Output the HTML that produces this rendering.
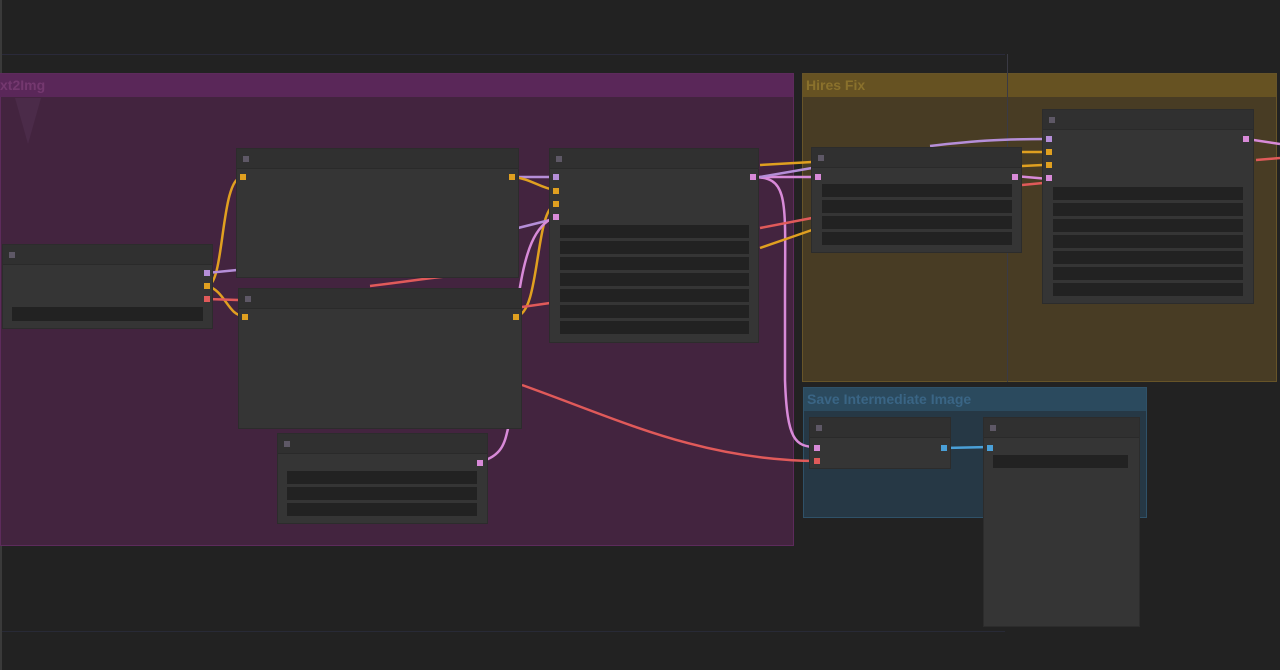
<!DOCTYPE html>
<html><head><meta charset="utf-8"><style>
*{margin:0;padding:0;box-sizing:border-box}
body{width:1280px;height:670px;background:#222;overflow:hidden;position:relative;font-family:"Liberation Sans",sans-serif}
.a{position:absolute}
.g{position:absolute}
.gh{position:absolute;left:0;right:0;top:0;height:23px;font-weight:bold;font-size:14px;padding:3px 0 0 3px}
.n{position:absolute;background:#353535;box-shadow:0 0 0 1px #2c2c2c}
.t{position:absolute;left:0;right:0;top:0;height:20px;background:#303030;border-bottom:1px solid #2a2a2a}
.t:before{content:"";position:absolute;left:6px;top:7px;width:6px;height:6px;background:#5e5866}
.w{position:absolute;background:#222;height:13px}
.p{position:absolute;width:6px;height:6px}
</style></head><body>
<div class="a" style="left:0;top:54px;width:1005px;height:1px;background:#2a2a3a"></div>
<div class="a" style="left:0;top:631px;width:1005px;height:1px;background:#282a36"></div>
<div class="a" style="left:0;top:0;width:2px;height:670px;background:#3a3a3a"></div>

<div class="g" style="left:0;top:73px;width:794px;height:473px;background:#43243f;border:1px solid #5d2b5c">
 <div class="gh" style="background:#5a2759;color:#74386f;left:-1px;padding-left:0">xt2Img</div>
 <div class="a" style="left:14px;top:24px;width:0;height:0;border-left:13px solid transparent;border-right:13px solid transparent;border-top:46px solid #4b2b49"></div>
</div>
<div class="g" style="left:802px;top:73px;width:475px;height:309px;background:#483c24;border:1px solid #675428">
 <div class="gh" style="background:#665222;color:#8a712c">Hires Fix</div>
</div>
<div class="g" style="left:803px;top:387px;width:344px;height:131px;background:#263845;border:1px solid #2f5168">
 <div class="gh" style="background:#2b4a5e;color:#3a6585">Save Intermediate Image</div>
</div>
<div class="a" style="left:1007px;top:54px;width:1px;height:328px;background:#3a3a44"></div>

<svg class="a" style="left:0;top:0" width="1280" height="670" fill="none" stroke-width="2.5">
 <path d="M207 286 C225 286 220 178 242 177" stroke="#e0a020"/>
 <path d="M207 286 C225 290 228 316 244 316" stroke="#e0a020"/>
 <path d="M207 273 L237 270" stroke="#b58ed8"/>
 <path d="M207 299 L238 300" stroke="#e05a5a"/>
 <path d="M370 286 C420 280 440 276 465 275" stroke="#e05a5a"/>
 <path d="M512 177 L550 177" stroke="#b58ed8"/>
 <path d="M512 177 C530 178 540 188 555 190" stroke="#e0a020"/>
 <path d="M516 316 C540 316 535 210 555 205" stroke="#e0a020"/>
 <path d="M518 228 L550 220" stroke="#b58ed8"/>
 <path d="M480 462 C505 455 505 440 510 420" stroke="#d88ad8"/>
 <path d="M522 307 L550 303" stroke="#e05a5a"/>
 <path d="M522 385 C620 420 700 460 817 461" stroke="#e05a5a"/>
 <path d="M518 300 C525 250 535 225 555 217" stroke="#d88ad8"/>
 <path d="M753 177 C790 177 785 200 785 300 L785 380 C787 440 795 447 817 447" stroke="#d88ad8"/>
 <path d="M753 177 L817 177" stroke="#d88ad8"/>
 <path d="M760 165 L812 162" stroke="#e0a020"/>
 <path d="M760 177 L812 168" stroke="#b58ed8"/>
 <path d="M760 228 L812 218" stroke="#e05a5a"/>
 <path d="M760 248 L812 230" stroke="#e0a020"/>
 <path d="M930 146 C980 140 1010 139 1049 139" stroke="#b58ed8"/>
 <path d="M1015 176 L1049 179" stroke="#d88ad8"/>
 <path d="M1022 152 L1043 152" stroke="#e0a020"/>
 <path d="M1022 166 L1043 165" stroke="#e0a020"/>
 <path d="M1022 185 L1043 183" stroke="#e05a5a"/>
 <path d="M1247 139 L1280 144" stroke="#d88ad8"/>
 <path d="M1256 160 L1280 158" stroke="#e05a5a"/>
 <path d="M944 448 L990 447" stroke="#4aa0d8"/>
</svg>

<div class="n" style="left:3px;top:245px;width:209px;height:83px"><div class="t"></div>
 <div class="w" style="left:9px;top:62px;width:191px;height:14px"></div></div>
<div class="n" style="left:237px;top:149px;width:281px;height:128px"><div class="t"></div></div>
<div class="n" style="left:239px;top:289px;width:282px;height:139px"><div class="t"></div></div>
<div class="n" style="left:278px;top:434px;width:209px;height:89px"><div class="t"></div>
 <div class="w" style="left:9px;top:37px;width:190px"></div><div class="w" style="left:9px;top:53px;width:190px"></div><div class="w" style="left:9px;top:69px;width:190px"></div></div>
<div class="n" style="left:550px;top:149px;width:208px;height:193px"><div class="t"></div>
 <div class="w" style="left:10px;top:76px;width:189px"></div><div class="w" style="left:10px;top:92px;width:189px"></div><div class="w" style="left:10px;top:108px;width:189px"></div><div class="w" style="left:10px;top:124px;width:189px"></div><div class="w" style="left:10px;top:140px;width:189px"></div><div class="w" style="left:10px;top:156px;width:189px"></div><div class="w" style="left:10px;top:172px;width:189px"></div></div>
<div class="n" style="left:812px;top:148px;width:209px;height:104px"><div class="t"></div>
 <div class="w" style="left:10px;top:36px;width:190px"></div><div class="w" style="left:10px;top:52px;width:190px"></div><div class="w" style="left:10px;top:68px;width:190px"></div><div class="w" style="left:10px;top:84px;width:190px"></div></div>
<div class="n" style="left:1043px;top:110px;width:210px;height:193px"><div class="t"></div>
 <div class="w" style="left:10px;top:77px;width:190px"></div><div class="w" style="left:10px;top:93px;width:190px"></div><div class="w" style="left:10px;top:109px;width:190px"></div><div class="w" style="left:10px;top:125px;width:190px"></div><div class="w" style="left:10px;top:141px;width:190px"></div><div class="w" style="left:10px;top:157px;width:190px"></div><div class="w" style="left:10px;top:173px;width:190px"></div></div>
<div class="n" style="left:810px;top:418px;width:140px;height:50px"><div class="t"></div></div>
<div class="n" style="left:984px;top:418px;width:155px;height:208px"><div class="t"></div>
 <div class="w" style="left:9px;top:37px;width:135px"></div></div>

<div class="p" style="left:204px;top:270px;background:#b58ed8"></div>
<div class="p" style="left:204px;top:283px;background:#e0a020"></div>
<div class="p" style="left:204px;top:296px;background:#e05a5a"></div>
<div class="p" style="left:240px;top:174px;background:#e0a020"></div>
<div class="p" style="left:509px;top:174px;background:#e0a020"></div>
<div class="p" style="left:242px;top:314px;background:#e0a020"></div>
<div class="p" style="left:513px;top:314px;background:#e0a020"></div>
<div class="p" style="left:477px;top:460px;background:#d88ad8"></div>
<div class="p" style="left:553px;top:174px;background:#b58ed8"></div>
<div class="p" style="left:553px;top:188px;background:#e0a020"></div>
<div class="p" style="left:553px;top:201px;background:#e0a020"></div>
<div class="p" style="left:553px;top:214px;background:#d88ad8"></div>
<div class="p" style="left:750px;top:174px;background:#d88ad8"></div>
<div class="p" style="left:815px;top:174px;background:#d88ad8"></div>
<div class="p" style="left:1012px;top:174px;background:#d88ad8"></div>
<div class="p" style="left:1046px;top:136px;background:#b58ed8"></div>
<div class="p" style="left:1046px;top:149px;background:#e0a020"></div>
<div class="p" style="left:1046px;top:162px;background:#e0a020"></div>
<div class="p" style="left:1046px;top:175px;background:#d88ad8"></div>
<div class="p" style="left:1243px;top:136px;background:#d88ad8"></div>
<div class="p" style="left:814px;top:445px;background:#d88ad8"></div>
<div class="p" style="left:814px;top:458px;background:#e05a5a"></div>
<div class="p" style="left:941px;top:445px;background:#4aa0d8"></div>
<div class="p" style="left:987px;top:445px;background:#4aa0d8"></div>
</body></html>
